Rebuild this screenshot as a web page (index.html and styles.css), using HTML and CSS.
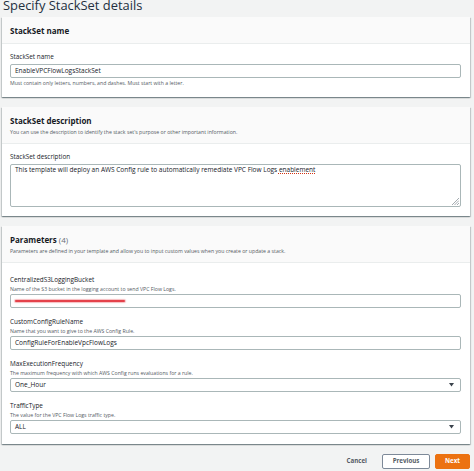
FILE: index.html
```html
<!DOCTYPE html>
<html lang="en">
<head>
<meta charset="utf-8">
<title>Specify StackSet details</title>
<link rel="stylesheet" href="styles.css">
</head>
<body>
<main class="page">
  <h1 class="title">Specify StackSet details</h1>
  <div class="stack">
    <section class="card">
      <header class="card-head">
        <h2 class="card-title">StackSet name</h2>
      </header>
      <div class="card-body body-name">
        <div class="label">StackSet name</div>
        <div class="input"><span>EnableVPCFlowLogsStackSet</span></div>
        <div class="hint">Must contain only letters, numbers, and dashes. Must start with a letter.</div>
      </div>
    </section>

    <section class="card">
      <header class="card-head">
        <h2 class="card-title">StackSet description</h2>
        <p class="card-sub">You can use the description to identify the stack set's purpose or other important information.</p>
      </header>
      <div class="card-body body-desc">
        <div class="label">StackSet description</div>
        <div class="textarea">
          <span>This template will deploy an AWS Config rule to automatically remediate VPC Flow Logs <span class="spell">enablement</span></span>
          <svg class="grip" width="7" height="7" viewBox="0 0 7 7" aria-hidden="true">
            <path d="M7 0 L0 7 M7 2.5 L2.5 7 M7 5 L5 7" stroke="#8d969c" stroke-width="0.8" fill="none"/>
          </svg>
        </div>
      </div>
    </section>

    <section class="card">
      <header class="card-head">
        <h2 class="card-title">Parameters <span class="count">(4)</span></h2>
        <p class="card-sub">Parameters are defined in your template and allow you to input custom values when you create or update a stack.</p>
      </header>
      <div class="card-body body-params">
        <div class="field">
          <div class="label">CentralizedS3LoggingBucket</div>
          <div class="desc">Name of the S3 bucket in the logging account to send VPC Flow Logs.</div>
          <div class="input"><span class="redact"></span></div>
        </div>
        <div class="field">
          <div class="label">CustomConfigRuleName</div>
          <div class="desc">Name that you want to give to the AWS Config Rule.</div>
          <div class="input"><span>ConfigRuleForEnableVpcFlowLogs</span></div>
        </div>
        <div class="field">
          <div class="label">MaxExecutionFrequency</div>
          <div class="desc">The maximum frequency with which AWS Config runs evaluations for a rule.</div>
          <div class="input select"><span>One_Hour</span>
            <svg class="caret" width="5" height="4" viewBox="0 0 5 4" aria-hidden="true"><polygon points="0,0 5,0 2.5,3.6" fill="#3b434c"/></svg>
          </div>
        </div>
        <div class="field">
          <div class="label">TrafficType</div>
          <div class="desc">The value for the VPC Flow Logs traffic type.</div>
          <div class="input select"><span>ALL</span>
            <svg class="caret" width="5" height="4" viewBox="0 0 5 4" aria-hidden="true"><polygon points="0,0 5,0 2.5,3.6" fill="#3b434c"/></svg>
          </div>
        </div>
      </div>
    </section>

    <div class="actions">
      <button class="btn btn-link" type="button">Cancel</button>
      <button class="btn btn-normal" type="button">Previous</button>
      <button class="btn btn-primary" type="button">Next</button>
    </div>
  </div>
</main>
</body>
</html>
```

FILE: styles.css
```css
* {
  box-sizing: border-box;
}

html,
body {
  margin: 0;
  padding: 0;
}

body {
  width: 474px;
  height: 471px;
  overflow: hidden;
  background: #f2f3f3;
  font-family: "Open Sans", "Noto Sans", "DejaVu Sans", sans-serif;
  color: #16191f;
}

.page {
  padding: 0 4px 0 2px;
}

.title {
  margin: 0;
  height: 17px;
  padding-left: 1px;
  font-size: 12.9px;
  font-weight: 400;
  line-height: 11.4px;
  color: #232f3e;
  white-space: nowrap;
}

.stack {
  display: flex;
  flex-direction: column;
  gap: 10px;
}

.card {
  background: #ffffff;
  box-shadow: 0 1px 1px 0 rgba(0, 28, 36, 0.3),
    1px 1px 1px 0 rgba(0, 28, 36, 0.15),
    -1px 1px 1px 0 rgba(0, 28, 36, 0.15);
}

.card-head {
  background: #fafafa;
  border-bottom: 1px solid #eaeded;
  padding: 9px 8px 7px;
}

.card-title {
  margin: 0;
  font-size: 8px;
  font-weight: 700;
  line-height: 10px;
  white-space: nowrap;
}

.count {
  font-weight: 400;
  color: #687078;
}

.card-sub {
  margin: 3px 0 0;
  font-size: 5.2px;
  line-height: 7px;
  color: #545b64;
  white-space: nowrap;
}

.card-body {
  padding: 9px 9px 10px 8px;
}

.body-desc {
  padding-bottom: 9px;
}

.body-params {
  padding-top: 13px;
  display: flex;
  flex-direction: column;
  gap: 10px;
}

.field {
  display: flex;
  flex-direction: column;
}

.label {
  font-size: 6.4px;
  line-height: 8px;
  color: #16191f;
  white-space: nowrap;
}

.desc {
  margin-top: 1px;
  font-size: 5.2px;
  line-height: 8px;
  color: #545b64;
  white-space: nowrap;
}

.hint {
  margin-top: 2px;
  font-size: 5.2px;
  line-height: 7px;
  color: #545b64;
  white-space: nowrap;
}

.input {
  height: 14px;
  margin-top: 1px;
  padding: 0 6px 0 4px;
  display: flex;
  align-items: center;
  background: #ffffff;
  border: 1px solid #aab7b8;
  border-radius: 2px;
  font-size: 6.5px;
  line-height: 8px;
  color: #16191f;
  white-space: nowrap;
}

.body-name .input {
  margin-top: 3px;
}

.select {
  justify-content: space-between;
}

.caret {
  display: block;
  flex: none;
}

.redact {
  display: block;
  width: 110px;
  height: 2.5px;
  border-radius: 2px;
  background: #e4424b;
  box-shadow: 0 0 1px 1px rgba(228, 66, 75, 0.35);
}

.textarea {
  position: relative;
  height: 43px;
  margin-top: 3px;
  padding: 1px 4px;
  background: #ffffff;
  border: 1px solid #aab7b8;
  border-radius: 2px;
  font-size: 6.5px;
  line-height: 8px;
  color: #16191f;
  white-space: nowrap;
}

.spell {
  text-decoration: underline dotted #d13212;
  text-decoration-thickness: 1px;
  text-underline-offset: 1px;
}

.grip {
  position: absolute;
  right: 1px;
  bottom: 1px;
}

.actions {
  display: flex;
  justify-content: flex-end;
  align-items: center;
  gap: 5px;
}

.btn {
  height: 15px;
  margin: 0;
  font-family: inherit;
  font-size: 6.2px;
  font-weight: 700;
  line-height: 1;
  border-radius: 2px;
  cursor: pointer;
}

.btn-link {
  padding: 0 10px 0 0;
  background: none;
  border: none;
  color: #545b64;
}

.btn-normal {
  width: 48px;
  padding: 0;
  background: #ffffff;
  border: 1px solid #7d8998;
  color: #545b64;
}

.btn-primary {
  width: 35px;
  padding: 0;
  background: #ec7211;
  border: 1px solid #ec7211;
  color: #ffffff;
}
```
